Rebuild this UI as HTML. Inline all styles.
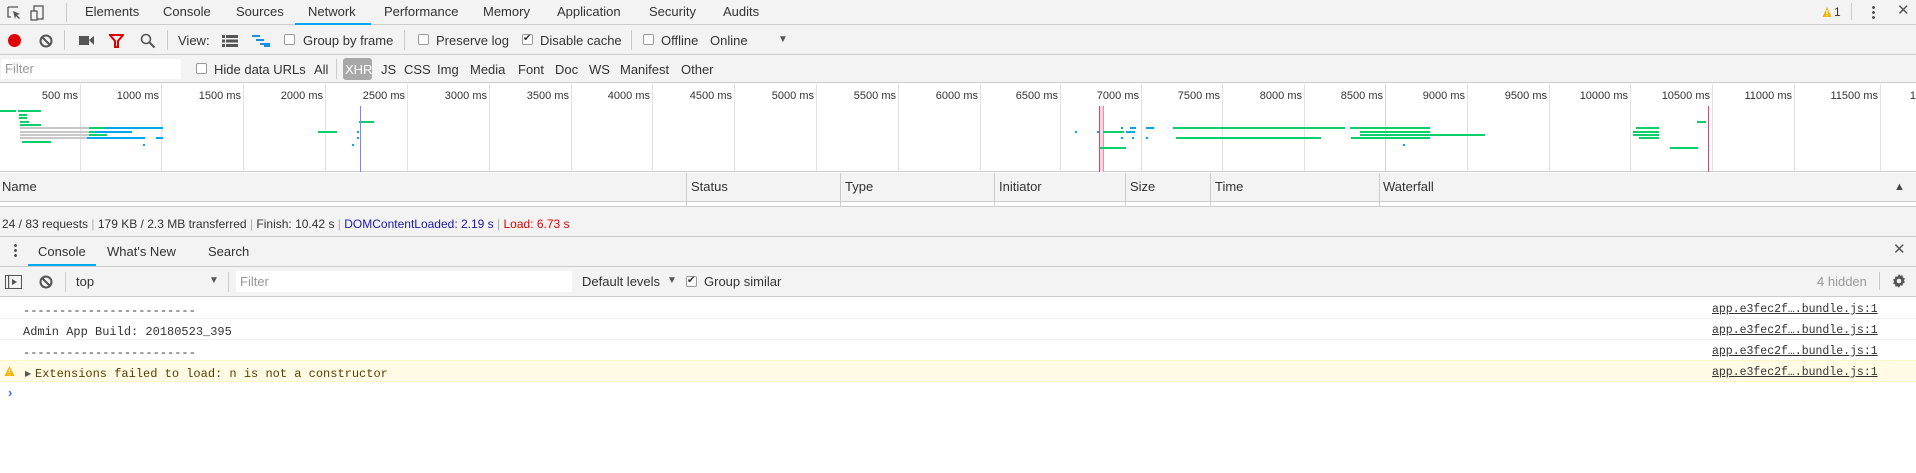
<!DOCTYPE html>
<html><head><meta charset="utf-8"><style>
*{box-sizing:border-box;margin:0;padding:0}
body{width:1916px;height:473px;overflow:hidden;background:#fff;font-family:"Liberation Sans",sans-serif;font-size:13px;color:#333;position:relative}
.a{position:absolute;white-space:nowrap}
.bar{position:absolute;left:0;right:0;background:#f3f3f3;border-bottom:1px solid #ccc}
.t{position:absolute;white-space:nowrap;line-height:16px}
.cb{position:absolute;width:11px;height:11px;border:1px solid #999;border-radius:2px;background:#fff}
.dv{position:absolute;width:1px;background:#ccc}
.g{position:absolute;top:84px;height:88px;width:1px;background:#e2e2e2}
.lb{position:absolute;top:90px;font-size:11px;color:#333;text-align:right;width:60px}
.b{position:absolute;height:2px}
.gr{background:#0cce6b}.bl{background:#00a6f0}.gy{background:#c8c8c8}
.mono{font-family:"Liberation Mono",monospace;font-size:12px}
.row{position:absolute;left:0;right:0;border-bottom:1px solid #f0f0f0}
.lnk{position:absolute;left:1712px;color:#333;text-decoration:underline;font-family:"Liberation Mono",monospace;font-size:11.5px}
</style></head><body>
<!-- tab bar -->
<div class="bar" style="top:0;height:25px"></div>
<svg class="a" style="left:6px;top:5px" width="40" height="16" viewBox="0 0 40 16"><path d="M2 2h10M2 2v10h3" stroke="#555" fill="none" stroke-width="1.3"/><path d="M7 6l7 3-3 1 3 3-1 1-3-3-1 3z" fill="#555"/><rect x="28" y="1" width="9" height="13" fill="none" stroke="#555" stroke-width="1.3"/><rect x="25" y="6" width="6" height="9" fill="#f3f3f3" stroke="#555" stroke-width="1.3"/></svg>
<div class="dv" style="left:66px;top:3px;height:19px"></div>
<div class="t" style="left:85px;top:4px">Elements</div>
<div class="t" style="left:163px;top:4px">Console</div>
<div class="t" style="left:236px;top:4px">Sources</div>
<div class="t" style="left:308px;top:4px">Network</div>
<div class="a" style="left:295px;top:23px;width:76px;height:2px;background:#03a9f4"></div>
<div class="t" style="left:384px;top:4px">Performance</div>
<div class="t" style="left:483px;top:4px">Memory</div>
<div class="t" style="left:557px;top:4px">Application</div>
<div class="t" style="left:649px;top:4px">Security</div>
<div class="t" style="left:723px;top:4px">Audits</div>
<svg class="a" style="left:1822px;top:6px" width="10" height="12"><path d="M5 1L9.5 11H.5z" fill="#f4b400"/><rect x="4.4" y="4" width="1.2" height="4" fill="#fff"/><rect x="4.4" y="9" width="1.2" height="1.2" fill="#fff"/></svg>
<div class="t" style="left:1834px;top:4px;font-size:12px">1</div>
<div class="dv" style="left:1851px;top:3px;height:17px"></div>
<div class="a" style="left:1872px;top:5px;width:3px;height:15px;background:radial-gradient(circle,#555 1.3px,transparent 1.6px) 0 0/3px 5px"></div>
<div class="t" style="left:1897px;top:3px;font-size:15px;color:#555">✕</div>
<!-- toolbar -->
<div class="bar" style="top:25px;height:30px"></div>
<div class="a" style="left:8px;top:34px;width:13px;height:13px;border-radius:50%;background:#e10000"></div>
<svg class="a" style="left:39px;top:34px" width="14" height="14"><circle cx="7" cy="7" r="5.5" fill="none" stroke="#555" stroke-width="2"/><path d="M3 3l8 8" stroke="#555" stroke-width="2"/></svg>
<div class="dv" style="left:64px;top:30px;height:20px"></div>
<svg class="a" style="left:79px;top:35px" width="16" height="11"><rect x="0" y="1" width="10" height="9" fill="#555"/><path d="M10 5l5-4v9z" fill="#555"/></svg>
<svg class="a" style="left:109px;top:34px" width="15" height="14"><path d="M1 1h13l-5 6v6H6V7z" fill="none" stroke="#e10000" stroke-width="2"/></svg>
<svg class="a" style="left:140px;top:33px" width="16" height="16"><circle cx="6" cy="6" r="4.5" fill="none" stroke="#555" stroke-width="1.6"/><path d="M9.5 9.5l5 5" stroke="#555" stroke-width="2"/></svg>
<div class="dv" style="left:167px;top:30px;height:20px"></div>
<div class="t" style="left:178px;top:33px">View:</div>
<svg class="a" style="left:222px;top:35px" width="16" height="12"><rect x="0" y="0" width="3" height="3" fill="#555"/><rect x="4" y="0" width="12" height="3" fill="#555"/><rect x="0" y="4.5" width="3" height="3" fill="#555"/><rect x="4" y="4.5" width="12" height="3" fill="#555"/><rect x="0" y="9" width="3" height="3" fill="#555"/><rect x="4" y="9" width="12" height="3" fill="#555"/></svg>
<svg class="a" style="left:252px;top:35px" width="19" height="12"><rect x="0" y="0" width="8" height="2" fill="#1a8fe0"/><rect x="4" y="4" width="8" height="2" fill="#1a8fe0"/><rect x="8" y="8" width="10" height="2" fill="#1a8fe0"/><rect x="12" y="10" width="6" height="2" fill="#1a8fe0"/></svg>
<div class="cb" style="left:284px;top:34px"></div><div class="t" style="left:303px;top:33px">Group by frame</div>
<div class="dv" style="left:404px;top:30px;height:20px"></div>
<div class="cb" style="left:418px;top:34px"></div><div class="t" style="left:436px;top:33px">Preserve log</div>
<div class="cb" style="left:522px;top:34px"></div><div class="t" style="left:523px;top:31px;font-size:10px">✔</div><div class="t" style="left:540px;top:33px">Disable cache</div>
<div class="dv" style="left:631px;top:30px;height:20px"></div>
<div class="cb" style="left:643px;top:34px"></div><div class="t" style="left:661px;top:33px">Offline</div>
<div class="t" style="left:710px;top:33px">Online</div>
<div class="t" style="left:778px;top:32px;font-size:10px;color:#555">▼</div>
<!-- filter row -->
<div class="bar" style="top:55px;height:28px"></div>
<div class="a" style="left:1px;top:59px;width:180px;height:20px;background:#fff;color:#999;padding:2px 4px;line-height:16px">Filter</div>
<div class="cb" style="left:196px;top:63px"></div><div class="t" style="left:214px;top:62px">Hide data URLs</div>
<div class="t" style="left:314px;top:62px">All</div>
<div class="dv" style="left:336px;top:59px;height:20px"></div>
<div class="a" style="left:343px;top:58px;width:29px;height:22px;background:#a8a8a8;border-radius:3px"></div>
<div class="t" style="left:345px;top:62px;color:#fff">XHR</div>
<div class="t" style="left:381px;top:62px">JS</div>
<div class="t" style="left:404px;top:62px">CSS</div>
<div class="t" style="left:437px;top:62px">Img</div>
<div class="t" style="left:470px;top:62px">Media</div>
<div class="t" style="left:518px;top:62px">Font</div>
<div class="t" style="left:555px;top:62px">Doc</div>
<div class="t" style="left:589px;top:62px">WS</div>
<div class="t" style="left:620px;top:62px">Manifest</div>
<div class="t" style="left:681px;top:62px">Other</div>
<!-- timeline -->
<div class="a" style="left:0;top:83px;width:1916px;height:89px;background:#fff;border-bottom:1px solid #ccc"></div>
<div id="grid"></div>
<div class="g" style="left:80px"></div><div class="lb" style="left:18px">500 ms</div>
<div class="g" style="left:161px"></div><div class="lb" style="left:99px">1000 ms</div>
<div class="g" style="left:243px"></div><div class="lb" style="left:181px">1500 ms</div>
<div class="g" style="left:325px"></div><div class="lb" style="left:263px">2000 ms</div>
<div class="g" style="left:407px"></div><div class="lb" style="left:345px">2500 ms</div>
<div class="g" style="left:489px"></div><div class="lb" style="left:427px">3000 ms</div>
<div class="g" style="left:571px"></div><div class="lb" style="left:509px">3500 ms</div>
<div class="g" style="left:652px"></div><div class="lb" style="left:590px">4000 ms</div>
<div class="g" style="left:734px"></div><div class="lb" style="left:672px">4500 ms</div>
<div class="g" style="left:816px"></div><div class="lb" style="left:754px">5000 ms</div>
<div class="g" style="left:898px"></div><div class="lb" style="left:836px">5500 ms</div>
<div class="g" style="left:980px"></div><div class="lb" style="left:918px">6000 ms</div>
<div class="g" style="left:1060px"></div><div class="lb" style="left:998px">6500 ms</div>
<div class="g" style="left:1141px"></div><div class="lb" style="left:1079px">7000 ms</div>
<div class="g" style="left:1222px"></div><div class="lb" style="left:1160px">7500 ms</div>
<div class="g" style="left:1304px"></div><div class="lb" style="left:1242px">8000 ms</div>
<div class="g" style="left:1385px;background:#d4d4d4"></div><div class="lb" style="left:1323px">8500 ms</div>
<div class="g" style="left:1467px"></div><div class="lb" style="left:1405px">9000 ms</div>
<div class="g" style="left:1549px"></div><div class="lb" style="left:1487px">9500 ms</div>
<div class="g" style="left:1630px"></div><div class="lb" style="left:1568px">10000 ms</div>
<div class="g" style="left:1712px"></div><div class="lb" style="left:1650px">10500 ms</div>
<div class="g" style="left:1794px"></div><div class="lb" style="left:1732px">11000 ms</div>
<div class="g" style="left:1880px"></div><div class="lb" style="left:1818px">11500 ms</div>
<div class="lb" style="left:1850px;width:66px">1</div>
<!-- bars -->
<div class="b gr" style="left:0;top:110px;width:16px"></div><div class="b gr" style="left:18px;top:110px;width:23px"></div>
<div class="b gr" style="left:19px;top:114px;width:8px"></div>
<div class="b gr" style="left:19px;top:117px;width:8px"></div>
<div class="b gr" style="left:20px;top:121px;width:9px"></div>
<div class="b gr" style="left:20px;top:124px;width:21px"></div>
<div class="b gy" style="left:20px;top:127px;width:69px"></div><div class="b gr" style="left:89px;top:127px;width:16px"></div><div class="b bl" style="left:105px;top:127px;width:58px"></div>
<div class="b gy" style="left:20px;top:131px;width:69px"></div><div class="b gr" style="left:89px;top:131px;width:6px"></div><div class="b bl" style="left:95px;top:131px;width:37px"></div>
<div class="b gy" style="left:20px;top:134px;width:69px"></div><div class="b gr" style="left:89px;top:134px;width:18px"></div>
<div class="b gy" style="left:20px;top:137px;width:67px"></div><div class="b bl" style="left:87px;top:137px;width:58px"></div><div class="b bl" style="left:156px;top:137px;width:7px"></div>
<div class="b gr" style="left:22px;top:141px;width:29px"></div>
<div class="b bl" style="left:143px;top:144px;width:2px"></div>
<div class="b gr" style="left:318px;top:131px;width:19px"></div>
<div class="b gr" style="left:359px;top:121px;width:15px"></div>
<div class="b bl" style="left:357px;top:131px;width:2px"></div><div class="b bl" style="left:357px;top:137px;width:2px"></div><div class="b bl" style="left:352px;top:144px;width:2px"></div>
<div class="a" style="left:360px;top:106px;width:1px;height:66px;background:#8080ff"></div>
<div class="a" style="left:1099px;top:106px;width:5px;height:66px;background:#ffd6e0"></div>
<div class="a" style="left:1099px;top:106px;width:1px;height:66px;background:#e0407a"></div>
<div class="a" style="left:1103px;top:106px;width:1px;height:66px;background:#f08aa8"></div>
<div class="a" style="left:1708px;top:106px;width:1px;height:66px;background:#e0407a"></div>
<div class="b bl" style="left:1121px;top:127px;width:2px"></div><div class="b bl" style="left:1130px;top:127px;width:6px"></div><div class="b bl" style="left:1146px;top:127px;width:8px"></div>
<div class="b gr" style="left:1173px;top:127px;width:172px"></div><div class="b gr" style="left:1350px;top:127px;width:80px"></div><div class="b gr" style="left:1636px;top:127px;width:23px"></div>
<div class="b bl" style="left:1075px;top:131px;width:2px"></div><div class="b bl" style="left:1097px;top:131px;width:2px"></div><div class="b gr" style="left:1103px;top:131px;width:21px"></div><div class="b bl" style="left:1126px;top:131px;width:9px"></div>
<div class="b gr" style="left:1360px;top:131px;width:70px"></div><div class="b gr" style="left:1633px;top:131px;width:26px"></div>
<div class="b gr" style="left:1360px;top:134px;width:125px"></div><div class="b gr" style="left:1633px;top:134px;width:26px"></div>
<div class="b bl" style="left:1121px;top:137px;width:2px"></div><div class="b bl" style="left:1132px;top:137px;width:2px"></div><div class="b bl" style="left:1146px;top:137px;width:2px"></div>
<div class="b gr" style="left:1176px;top:137px;width:145px"></div><div class="b gr" style="left:1351px;top:137px;width:79px"></div><div class="b gr" style="left:1639px;top:137px;width:20px"></div>
<div class="b bl" style="left:1403px;top:144px;width:2px"></div>
<div class="b gr" style="left:1100px;top:147px;width:26px"></div><div class="b gr" style="left:1670px;top:147px;width:28px"></div>
<div class="b gr" style="left:1697px;top:121px;width:9px"></div>
<!-- header -->
<div class="bar" style="top:173px;height:29px"></div>
<div class="t" style="left:2px;top:179px">Name</div>
<div class="dv" style="left:686px;top:173px;height:34px"></div><div class="t" style="left:691px;top:179px">Status</div>
<div class="dv" style="left:840px;top:173px;height:34px"></div><div class="t" style="left:845px;top:179px">Type</div>
<div class="dv" style="left:994px;top:173px;height:34px"></div><div class="t" style="left:999px;top:179px">Initiator</div>
<div class="dv" style="left:1125px;top:173px;height:34px"></div><div class="t" style="left:1130px;top:179px">Size</div>
<div class="dv" style="left:1210px;top:173px;height:34px"></div><div class="t" style="left:1215px;top:179px">Time</div>
<div class="dv" style="left:1379px;top:173px;height:34px"></div><div class="t" style="left:1383px;top:179px">Waterfall</div>
<div class="t" style="left:1894px;top:179px;font-size:11px;color:#444">▲</div>
<div class="a" style="left:0;top:206px;width:1916px;height:1px;background:#ccc"></div>
<!-- status -->
<div class="a" style="left:0;top:207px;width:1916px;height:30px;background:#f3f3f3;border-bottom:1px solid #ccc"></div>
<div class="t" style="left:2px;top:216px;font-size:12px">24 / 83 requests <span style="color:#aaa">|</span> 179 KB / 2.3 MB transferred <span style="color:#aaa">|</span> Finish: 10.42 s <span style="color:#aaa">|</span> <span style="color:#1a1aa6">DOMContentLoaded: 2.19 s</span> <span style="color:#aaa">|</span> <span style="color:#e10000">Load: 6.73 s</span></div>
<!-- drawer tabs -->
<div class="bar" style="top:237px;height:30px"></div>
<div class="a" style="left:14px;top:243px;width:3px;height:15px;background:radial-gradient(circle,#555 1.3px,transparent 1.6px) 0 0/3px 5px"></div>
<div class="t" style="left:38px;top:244px">Console</div>
<div class="a" style="left:28px;top:264px;width:68px;height:2px;background:#03a9f4"></div>
<div class="t" style="left:107px;top:244px">What's New</div>
<div class="t" style="left:208px;top:244px">Search</div>
<div class="t" style="left:1893px;top:242px;font-size:15px;color:#555">✕</div>
<!-- console toolbar -->
<div class="bar" style="top:267px;height:30px"></div>
<svg class="a" style="left:5px;top:275px" width="17" height="14"><rect x=".5" y=".5" width="16" height="13" fill="none" stroke="#555"/><rect x="3" y="1" width="1.2" height="12" fill="#555"/><path d="M7 4l5 3-5 3z" fill="#555"/></svg>
<svg class="a" style="left:39px;top:275px" width="14" height="14"><circle cx="7" cy="7" r="5.5" fill="none" stroke="#555" stroke-width="2"/><path d="M3 3l8 8" stroke="#555" stroke-width="2"/></svg>
<div class="dv" style="left:65px;top:272px;height:20px"></div>
<div class="t" style="left:76px;top:274px">top</div>
<div class="t" style="left:209px;top:273px;font-size:10px;color:#555">▼</div>
<div class="dv" style="left:228px;top:272px;height:20px"></div>
<div class="a" style="left:236px;top:271px;width:336px;height:21px;background:#fff;color:#999;padding:3px 4px;line-height:16px">Filter</div>
<div class="t" style="left:582px;top:274px">Default levels</div>
<div class="t" style="left:667px;top:273px;font-size:10px;color:#555">▼</div>
<div class="cb" style="left:686px;top:276px"></div><div class="t" style="left:687px;top:273px;font-size:10px">✔</div>
<div class="t" style="left:704px;top:274px">Group similar</div>
<div class="t" style="left:1817px;top:274px;color:#999">4 hidden</div>
<div class="dv" style="left:1879px;top:272px;height:18px"></div>
<svg class="a" style="left:1891px;top:273px" width="16" height="16" viewBox="0 0 16 16"><path d="M8 1l1.3 1.8 2.2-.5.4 2.2 2 1-.9 2 .9 2-2 1-.4 2.2-2.2-.5L8 15l-1.3-1.8-2.2.5-.4-2.2-2-1 .9-2-.9-2 2-1 .4-2.2 2.2.5z" fill="#555"/><circle cx="8" cy="8" r="2.3" fill="#f3f3f3"/></svg>
<!-- messages -->
<div class="row" style="top:297px;height:22px"></div>
<div class="t mono" style="left:23px;top:303px">------------------------</div>
<div class="lnk" style="top:303px">app.e3fec2f….bundle.js:1</div>
<div class="row" style="top:319px;height:21px"></div>
<div class="t mono" style="left:23px;top:324px">Admin App Build: 20180523_395</div>
<div class="lnk" style="top:324px">app.e3fec2f….bundle.js:1</div>
<div class="row" style="top:340px;height:21px;border-bottom:1px solid #fff5c2"></div>
<div class="t mono" style="left:23px;top:345px">------------------------</div>
<div class="lnk" style="top:345px">app.e3fec2f….bundle.js:1</div>
<div class="a" style="left:0;top:361px;width:1916px;height:21px;background:#fffbe5;border-bottom:1px solid #fff5c2"></div>
<svg class="a" style="left:4px;top:365px" width="11" height="12"><path d="M5.5 1L10.5 11H.5z" fill="#f4b400"/><rect x="4.9" y="4" width="1.2" height="4" fill="#fff"/><rect x="4.9" y="9" width="1.2" height="1.2" fill="#fff"/></svg>
<div class="t" style="left:25px;top:366px;font-size:8px;color:#555">▶</div>
<div class="t mono" style="left:35px;top:366px;color:#5c3c00">Extensions failed to load: n is not a constructor</div>
<div class="lnk" style="top:366px">app.e3fec2f….bundle.js:1</div>
<div class="t" style="left:8px;top:385px;color:#367cf1;font-size:13px;font-weight:bold">›</div>
</body></html>
